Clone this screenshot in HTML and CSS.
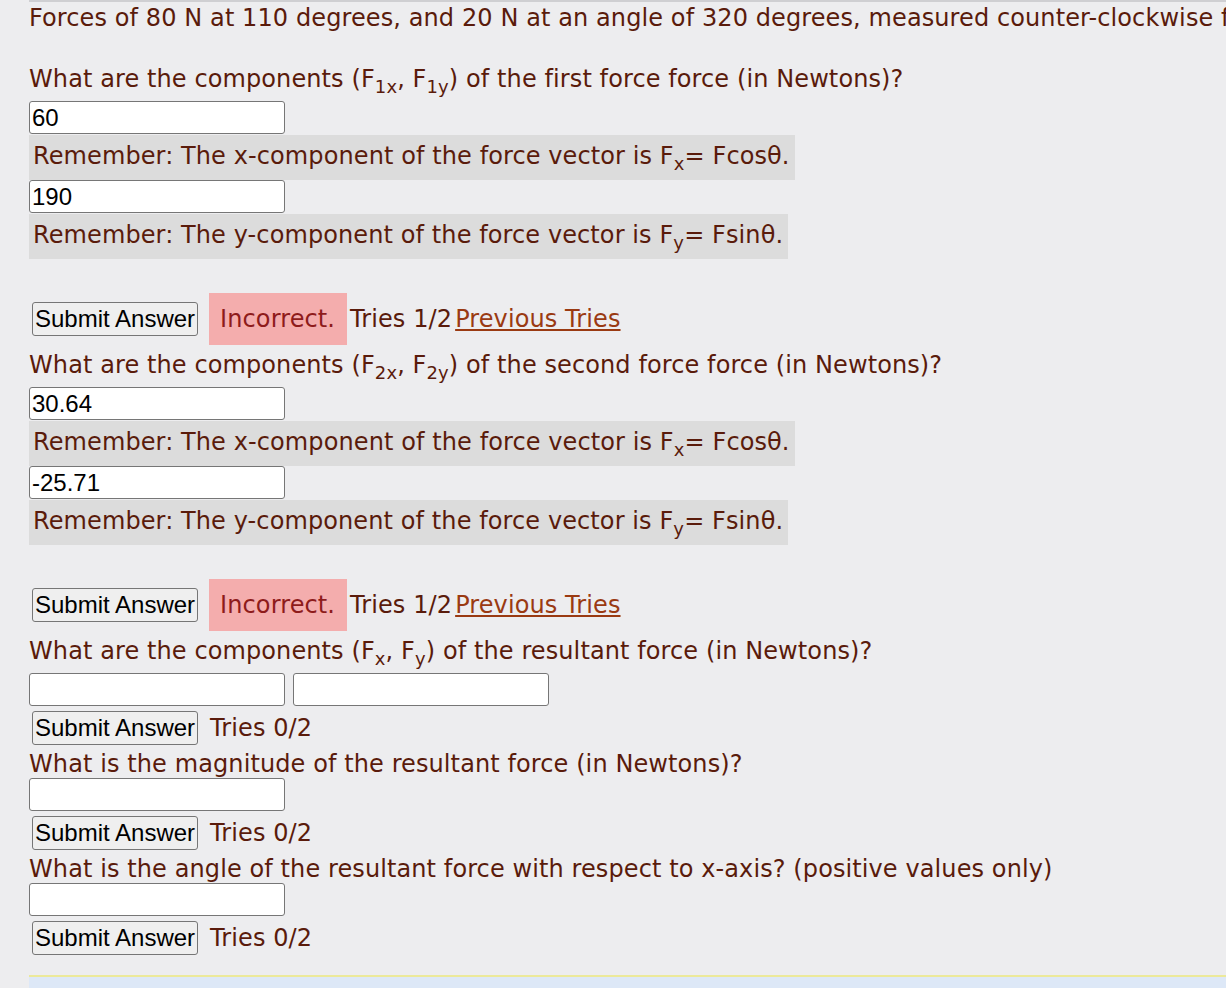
FILE: index.html
```html
<html>
<head>
    <meta charset="utf-8" />
    <link rel="stylesheet" href="styles.css">
</head>
<body>
    <div class="problem">
        <div class="intro">Forces of 80 N at 110 degrees, and 20 N at an angle of 320 degrees, measured counter-clockwise from the +x axis, act on an object.</div>

        <div class="question question--first">What are the components (F<sub>1x</sub>, F<sub>1y</sub>) of the first force force (in Newtons)?</div>
        <input class="answer" type="text" value="60" />
        <div class="hint">Remember: The x-component of the force vector is F<sub>x</sub>= Fcos&theta;.</div>
        <input class="answer" type="text" value="190" />
        <div class="hint">Remember: The y-component of the force vector is F<sub>y</sub>= Fsin&theta;.</div>
        <div class="submit submit--graded">
            <button class="submit__button">Submit Answer</button>
            <span class="submit__result">Incorrect.</span>
            <span class="submit__tries">Tries 1/2</span><a class="submit__prev" href="#">Previous Tries</a>
        </div>

        <div class="question">What are the components (F<sub>2x</sub>, F<sub>2y</sub>) of the second force force (in Newtons)?</div>
        <input class="answer" type="text" value="30.64" />
        <div class="hint">Remember: The x-component of the force vector is F<sub>x</sub>= Fcos&theta;.</div>
        <input class="answer" type="text" value="-25.71" />
        <div class="hint">Remember: The y-component of the force vector is F<sub>y</sub>= Fsin&theta;.</div>
        <div class="submit submit--graded">
            <button class="submit__button">Submit Answer</button>
            <span class="submit__result">Incorrect.</span>
            <span class="submit__tries">Tries 1/2</span><a class="submit__prev" href="#">Previous Tries</a>
        </div>

        <div class="question">What are the components (F<sub>x</sub>, F<sub>y</sub>) of the resultant force (in Newtons)?</div>
        <div class="answers">
            <input class="answer" type="text" value="" />
            <input class="answer" type="text" value="" />
        </div>
        <div class="submit">
            <button class="submit__button">Submit Answer</button>
            <span class="submit__tries">Tries 0/2</span>
        </div>

        <div class="question question--plain">What is the magnitude of the resultant force (in Newtons)?</div>
        <input class="answer" type="text" value="" />
        <div class="submit">
            <button class="submit__button">Submit Answer</button>
            <span class="submit__tries">Tries 0/2</span>
        </div>

        <div class="question question--plain">What is the angle of the resultant force with respect to x-axis? (positive values only)</div>
        <input class="answer" type="text" value="" />
        <div class="submit">
            <button class="submit__button">Submit Answer</button>
            <span class="submit__tries">Tries 0/2</span>
        </div>

        <div class="footer-box"></div>
    </div>
</body>
</html>
```

FILE: styles.css
```css
html,
body {
    margin: 0;
    padding: 0;
    background: #ededef;
    overflow: hidden;
}
.problem {
    margin-left: 29px;
    border-top: 2px solid #cfcfd2;
    color: #5a1b0b;
    font-family: "DejaVu Sans", Verdana, sans-serif;
    font-size: 24px;
    letter-spacing: 0.1px;
    line-height: 28px;
}
.problem sub {
    font-size: 18px;
    line-height: 0;
    vertical-align: -6px;
}

.intro {
    margin-top: 2px;
    white-space: nowrap;
    overflow: hidden;
}

.question {
    margin-top: 6px;
    padding-bottom: 8px;
    white-space: nowrap;
}
.question--first {
    margin-top: 33px;
}
.question--plain {
    margin-top: 5px;
    padding-bottom: 0;
}

.answer {
    box-sizing: border-box;
    display: block;
    width: 256px;
    height: 33px;
    margin: 0 0 1px;
    padding: 0 2px;
    background: #fff;
    border: 1px solid #767676;
    border-radius: 3px;
    color: #000;
    font-family: "Liberation Sans", Arial, sans-serif;
    font-size: 24px;
    letter-spacing: 0;
}
.answers {
    display: flex;
    gap: 8px;
}
.answers .answer {
    margin-bottom: 0;
}

.hint {
    width: fit-content;
    height: 45px;
    padding: 0 5px 0 4px;
    background: #dcdcdc;
    line-height: 43px;
    white-space: nowrap;
}

.submit {
    display: flex;
    align-items: center;
    height: 34px;
    margin-top: 5px;
    white-space: nowrap;
}
.submit--graded {
    height: 52px;
    margin-top: 34px;
}
.submit__button {
    box-sizing: border-box;
    height: 34px;
    margin: 0 0 0 3px;
    padding: 0 2px;
    background: #efefef;
    border: 1px solid #767676;
    border-radius: 3px;
    color: #000;
    font-family: "Liberation Sans", Arial, sans-serif;
    font-size: 24px;
    letter-spacing: 0;
}
.submit__result {
    align-self: stretch;
    margin-left: 11px;
    padding: 0 12px 0 11px;
    background: #f4adad;
    color: #8e1b1b;
    line-height: 52px;
}
.submit__tries {
    margin-left: 12px;
}
.submit--graded .submit__tries {
    margin-left: 3px;
}
.submit__prev {
    margin-left: 3px;
    color: #9a3a12;
    text-decoration: underline;
}

.footer-box {
    height: 30px;
    margin-top: 20px;
    background: #dde8f7;
    border-top: 2px solid #ece99a;
}
```
